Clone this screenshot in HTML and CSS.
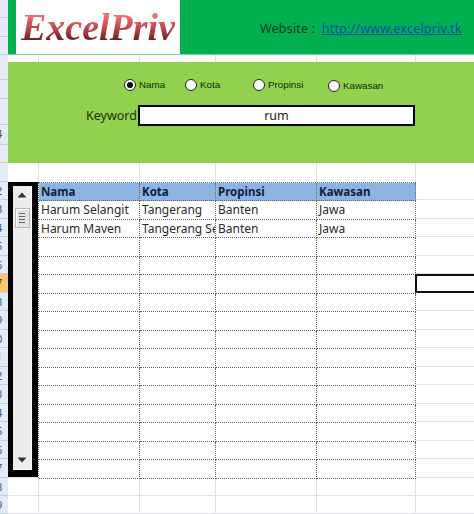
FILE: index.html
```html
<!DOCTYPE html>
<html lang="id">
<head>
<meta charset="utf-8">
<title>ExcelPriv</title>
<link rel="stylesheet" href="styles.css">
</head>
<body>
<div class="sheet">
  <div class="rowheads">
    <div class="rh h18"></div><div class="rh h19"></div><div class="rh h18"></div><div class="rh h25"></div>
    <div class="rh h19"></div><div class="rh h26"></div><div class="rh h20">4</div><div class="rh h18"></div>
    <div class="rh h19"></div>
    <div class="rh">2</div><div class="rh">3</div><div class="rh">4</div><div class="rh">5</div><div class="rh">6</div>
    <div class="rh active">7</div>
    <div class="rh">8</div><div class="rh">9</div><div class="rh">0</div><div class="rh">1</div><div class="rh">2</div>
    <div class="rh">3</div><div class="rh">4</div><div class="rh">5</div><div class="rh">6</div><div class="rh">7</div>
    <div class="rh">8</div><div class="rh">9</div>
  </div>
  <div class="canvas">
    <header class="band">
      <div class="logo"><span class="logotext">ExcelPriv</span></div>
      <div class="website">Website : <a href="#">http://www.excelpriv.tk</a></div>
    </header>
    <div class="gap g7"></div>
    <section class="panel">
      <div class="radios">
        <div class="radio on"><i></i>Nama</div>
        <div class="radio"><i></i>Kota</div>
        <div class="radio"><i></i>Propinsi</div>
        <div class="radio low"><i></i>Kawasan</div>
      </div>
      <div class="search">
        <span class="kw">Keyword</span>
        <div class="field">rum</div>
      </div>
    </section>
    <div class="gap g19"></div>
    <div class="zone">
      <div class="frame">
        <div class="scroll">
          <svg class="arrow" width="10" height="6" viewBox="0 0 10 6"><path d="M5 0.5 9.5 5.5H0.5Z" fill="#333"/></svg>
          <div class="thumb"><b></b><b></b><b></b><b></b></div>
          <svg class="arrow down" width="10" height="6" viewBox="0 0 10 6"><path d="M5 5.5 9.5 0.5H0.5Z" fill="#333"/></svg>
        </div>
      </div>
      <div class="table">
        <div class="c th">Nama</div><div class="c th">Kota</div><div class="c th">Propinsi</div><div class="c th">Kawasan</div>
        <div class="c">Harum Selangit</div><div class="c">Tangerang</div><div class="c">Banten</div><div class="c">Jawa</div>
        <div class="c">Harum Maven</div><div class="c">Tangerang Selatan</div><div class="c">Banten</div><div class="c">Jawa</div>
        <div class="c"></div><div class="c"></div><div class="c"></div><div class="c"></div>
        <div class="c"></div><div class="c"></div><div class="c"></div><div class="c"></div>
        <div class="c"></div><div class="c"></div><div class="c"></div><div class="c"></div>
        <div class="c"></div><div class="c"></div><div class="c"></div><div class="c"></div>
        <div class="c"></div><div class="c"></div><div class="c"></div><div class="c"></div>
        <div class="c"></div><div class="c"></div><div class="c"></div><div class="c"></div>
        <div class="c"></div><div class="c"></div><div class="c"></div><div class="c"></div>
        <div class="c"></div><div class="c"></div><div class="c"></div><div class="c"></div>
        <div class="c"></div><div class="c"></div><div class="c"></div><div class="c"></div>
        <div class="c"></div><div class="c"></div><div class="c"></div><div class="c"></div>
        <div class="c"></div><div class="c"></div><div class="c"></div><div class="c"></div>
        <div class="c"></div><div class="c"></div><div class="c"></div><div class="c"></div>
        <div class="c"></div><div class="c"></div><div class="c"></div><div class="c"></div>
      </div>
      <div class="selected"></div>
    </div>
  </div>
</div>
</body>
</html>
```
FILE: styles.css
```css
html, body {
  margin: 0;
  padding: 0;
  height: 514px;
  overflow: hidden;
  background: #fff;
}
.sheet {
  display: flex;
  width: 474px;
  height: 514px;
  overflow: hidden;
  font-family: "Noto Sans", sans-serif;
}

/* row header strip */
.rowheads {
  flex: 0 0 8px;
  width: 8px;
  display: flex;
  flex-direction: column;
  background: #e3ebf6;
}
.rh {
  flex: 0 0 18.47px;
  box-sizing: border-box;
  border-bottom: 1px solid #c5cfdc;
  overflow: hidden;
  color: #33608f;
  font-size: 11px;
  line-height: 17px;
  text-indent: -4px;
}
.rh.h18 { flex-basis: 18px; }
.rh.h19 { flex-basis: 19px; }
.rh.h20 { flex-basis: 20px; color: #555; }
.rh.h25 { flex-basis: 25px; }
.rh.h26 { flex-basis: 26px; }
.rh.active { background: #fbc56d; color: #444; }

/* sheet area */
.canvas {
  flex: 1;
  display: flex;
  flex-direction: column;
  min-width: 0;
  background-color: #fff;
  background-image:
    linear-gradient(#dde1e6, #dde1e6), linear-gradient(#dde1e6, #dde1e6),
    linear-gradient(#dde1e6, #dde1e6), linear-gradient(#dde1e6, #dde1e6),
    linear-gradient(#dde1e6, #dde1e6);
  background-size: 1px 100%;
  background-repeat: no-repeat;
  background-position: 30px 0, 131px 0, 207px 0, 308px 0, 407px 0;
}
.gap { flex: none; }
.g7 { height: 7px; }
.g19 { height: 19px; }

/* top band */
.band {
  flex: 0 0 55px;
  height: 55px;
  box-sizing: border-box;
  display: flex;
  align-items: stretch;
  background: #00b050;
  padding-left: 8px;
  border-bottom: 1px solid #7fd3a8;
}
.logo {
  flex: 0 0 164px;
  width: 164px;
  overflow: hidden;
  background: #fff;
  display: flex;
  align-items: center;
  justify-content: center;
}
.logotext {
  font-family: "Liberation Serif", serif;
  font-style: italic;
  font-weight: 700;
  font-size: 38px;
  line-height: 44px;
  background: linear-gradient(#ee6f74 25%, #b8434b 55%, #6f1f26 80%);
  -webkit-background-clip: text;
  background-clip: text;
  color: transparent;
}
.website {
  margin-left: 80px;
  padding-top: 20px;
  font-size: 12.5px;
  line-height: 18px;
  color: #053a1c;
  white-space: nowrap;
  letter-spacing: 0.2px;
}
.website a { color: #0b49b8; margin-left: 3px; }

/* green search panel */
.panel {
  flex: 0 0 101px;
  height: 101px;
  box-sizing: border-box;
  background: #92d050;
  padding-top: 16px;
}
.radios {
  display: grid;
  grid-template-columns: 61px 68px 75px auto;
  padding-left: 116px;
  height: 14px;
}
.radio {
  display: flex;
  align-items: center;
  gap: 3px;
  height: 14px;
  font-family: "Liberation Sans", sans-serif;
  font-size: 9.8px;
  line-height: 14px;
  color: #0f2b05;
}
.radio i {
  flex: none;
  width: 12px;
  height: 12px;
  box-sizing: border-box;
  border: 1px solid #222;
  border-radius: 50%;
  background: #fff;
  position: relative;
}
.radio.on i::after {
  content: "";
  position: absolute;
  inset: 2px;
  border-radius: 50%;
  background: #000;
}
.radio.low { margin-top: 1px; }
.search {
  display: flex;
  align-items: center;
  padding-left: 78px;
  margin-top: 13px;
}
.kw {
  width: 52px;
  font-size: 12.5px;
  color: #17340a;
}
.field {
  width: 277px;
  height: 21px;
  box-sizing: border-box;
  border: 2px solid #000;
  background: #fff;
  text-align: center;
  font-size: 12.5px;
  line-height: 17px;
  color: #222;
}

/* data zone */
.zone {
  position: relative;
  display: flex;
  flex: none;
  height: 332px;
  background-image: repeating-linear-gradient(transparent 0, transparent 17.47px, #dfe3e8 17.47px, #dfe3e8 18.47px);
}
.frame {
  flex: 0 0 30px;
  height: 295px;
  box-sizing: border-box;
  background: #000;
  padding: 4px 6px 7px 5px;
}
.scroll {
  height: 100%;
  background: #ececec;
  border-right: 1px solid #fff;
  border-bottom: 1px solid #fff;
  box-sizing: border-box;
  display: flex;
  flex-direction: column;
  align-items: center;
  padding-top: 6px;
}
.arrow { flex: none; }
.arrow.down { margin-top: auto; margin-bottom: 6px; }
.thumb {
  flex: none;
  margin-top: 10px;
  width: 15px;
  height: 20px;
  box-sizing: border-box;
  border: 1px solid #b9b9b9;
  background: #e2e2e2;
  box-shadow: inset 1px 1px 0 #fff;
  display: flex;
  flex-direction: column;
  align-items: flex-start;
  justify-content: center;
  gap: 2px;
  padding-left: 3px;
}
.thumb b {
  display: block;
  width: 6px;
  height: 1px;
  background: #666;
}
.table {
  flex: 0 0 377px;
  height: 295.5px;
  box-sizing: border-box;
  display: grid;
  grid-template-columns: 101px 76px 101px 99px;
  grid-auto-rows: 18.47px;
  background: #fff;
  border-top: 1px dotted #666;
  border-left: 1px dotted #666;
}
.c {
  box-sizing: border-box;
  border-right: 1px dotted #666;
  border-bottom: 1px dotted #666;
  overflow: hidden;
  white-space: nowrap;
  padding-left: 2px;
  font-size: 12px;
  line-height: 17px;
  color: #2a2a2a;
}
.th {
  background: #8db4e2;
  font-size: 11.5px;
  font-weight: 700;
  color: #0f2140;
}
.selected {
  position: absolute;
  left: 407px;
  top: 92px;
  width: 70px;
  height: 19px;
  box-sizing: border-box;
  border: 2px solid #111;
}
.selected::after {
  content: "";
  position: absolute;
  right: 2px;
  bottom: -2px;
  width: 3px;
  height: 3px;
  background: #333;
}
```
